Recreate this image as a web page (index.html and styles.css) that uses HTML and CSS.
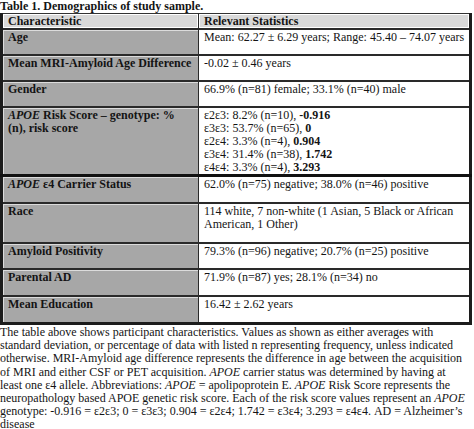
FILE: index.html
```html
<!DOCTYPE html>
<html>
<head>
<meta charset="utf-8">
<link rel="stylesheet" href="styles.css">
</head>
<body>
<div class="page">
  <div class="title">Table 1. Demographics of study sample.</div>
  <table class="demo">
    <tr class="head">
      <th class="c1">Characteristic</th>
      <th class="c2">Relevant Statistics</th>
    </tr>
    <tr>
      <td class="c1">Age</td>
      <td class="c2">Mean: 62.27 ± 6.29 years; Range: 45.40 – 74.07 years</td>
    </tr>
    <tr>
      <td class="c1">Mean MRI-Amyloid Age Difference</td>
      <td class="c2">-0.02 ± 0.46 years</td>
    </tr>
    <tr>
      <td class="c1">Gender</td>
      <td class="c2">66.9% (n=81) female; 33.1% (n=40) male</td>
    </tr>
    <tr class="thick">
      <td class="c1"><i>APOE</i> Risk Score – genotype: %<br>(n), risk score</td>
      <td class="c2 list">ε2ε3: 8.2% (n=10), <b>-0.916</b><br>ε3ε3: 53.7% (n=65), <b>0</b><br>ε2ε4: 3.3% (n=4), <b>0.904</b><br>ε3ε4: 31.4% (n=38), <b>1.742</b><br>ε4ε4: 3.3% (n=4), <b>3.293</b></td>
    </tr>
    <tr class="tall">
      <td class="c1"><i>APOE</i> ε4 Carrier Status</td>
      <td class="c2">62.0% (n=75) negative; 38.0% (n=46) positive</td>
    </tr>
    <tr class="tall">
      <td class="c1">Race</td>
      <td class="c2">114 white, 7 non-white (1 Asian, 5 Black or African American, 1 Other)</td>
    </tr>
    <tr>
      <td class="c1">Amyloid Positivity</td>
      <td class="c2">79.3% (n=96) negative; 20.7% (n=25) positive</td>
    </tr>
    <tr class="tall">
      <td class="c1">Parental AD</td>
      <td class="c2">71.9% (n=87) yes; 28.1% (n=34) no</td>
    </tr>
    <tr class="last">
      <td class="c1">Mean Education</td>
      <td class="c2">16.42 ± 2.62 years</td>
    </tr>
  </table>
  <p class="caption">The table above shows participant characteristics. Values as shown as either averages with standard deviation, or percentage of data with listed n representing frequency, unless indicated otherwise. MRI-Amyloid age difference represents the difference in age between the acquisition of MRI and either CSF or PET acquisition. <i>APOE</i> carrier status was determined by having at least one ε4 allele. Abbreviations: <i>APOE</i> = apolipoprotein E. <i>APOE</i> Risk Score represents the neuropathology based APOE genetic risk score. Each of the risk score values represent an <i>APOE</i> genotype: -0.916 = ε2ε3; 0 = ε3ε3; 0.904 = ε2ε4; 1.742 = ε3ε4; 3.293 = ε4ε4. AD = Alzheimer’s disease</p>
</div>
</body>
</html>
```

FILE: styles.css
```css
html, body {
  margin: 0;
  padding: 0;
  background: #fff;
}
.page {
  width: 474px;
  font-family: "Liberation Serif", "Times New Roman", serif;
  font-size: 12px;
  line-height: 13px;
  color: #141414;
}
.title {
  font-weight: bold;
  height: 13px;
}
.demo {
  width: 472px;
  border-collapse: collapse;
  border-left: 3px solid #1c1c1c;
  border-right: 3px solid #1c1c1c;
  border-top: 1px solid #333;
  border-bottom: 3px solid #1c1c1c;
}
.demo th, .demo td {
  text-align: left;
  vertical-align: top;
  padding: 1px 5px 10px 5px;
  border-bottom: 2px solid #2a2a2a;
  border-right: 1px solid #2a2a2a;
}
.demo .c1 {
  width: 185px;
  font-weight: bold;
  background: #a7a7a7;
  box-shadow: inset 1px 1px 0 #dcdcdc;
}
.demo .c2 {
  background: #fff;
  padding-right: 1px;
}
.demo .head th {
  font-weight: bold;
  background: #d9d9d9;
  box-shadow: inset 0 0 0 1px #fff;
  padding-bottom: 0;
}
.demo .list {
  padding-bottom: 0;
  line-height: 13px;
}
.demo tr.tall td {
  padding-bottom: 11px;
}
.demo tr.thick td {
  border-bottom: 3px solid #111;
}
.demo tr.last td {
  border-bottom: none;
  padding-bottom: 11px;
}
.caption {
  width: 465px;
  margin: 1px 0 0 0;
  line-height: 13.2px;
}
```
